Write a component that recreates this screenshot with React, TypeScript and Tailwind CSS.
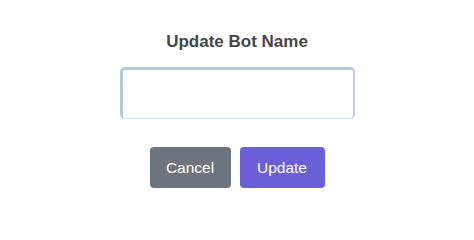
import React from "react";

export default function App() {
  return (
    <div className="w-[474px] h-[212px] bg-white flex flex-col items-center" style={{ fontFamily: '"Liberation Sans", Arial, sans-serif' }}>
      <h1 className="mt-[31px] h-[22px] leading-[22px] text-[17px] font-bold text-[#464646]">Update Bot Name</h1>
      <div className="mt-[14px] w-[235px] h-[52px] rounded-[5px] border-t-[3px] border-l-[3px] border-r-2 border-b border-t-[#b4c8e2] border-l-[#b4c8e2] border-r-[#bccfe6] border-b-[#d6e1ee] bg-white" />
      <div className="mt-[28px] flex gap-[9px]">
        <button className="w-[81px] h-[41px] rounded-[4px] bg-[#6c757d] text-white text-[15.5px]">Cancel</button>
        <button className="w-[85px] h-[41px] rounded-[4px] bg-[#6a5fd7] text-white text-[15.5px]">Update</button>
      </div>
    </div>
  );
}
